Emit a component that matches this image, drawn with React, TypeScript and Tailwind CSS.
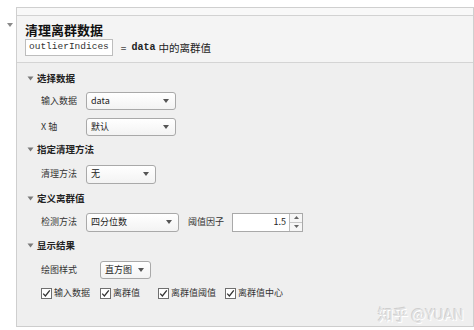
import React from 'react'

const FONT = { fontFamily: '"Noto Sans CJK SC", "Noto Sans", sans-serif' }

// Petit triangle de section
const Caret = () => (
  <svg width="7" height="5" viewBox="0 0 7 5" className="shrink-0">
    <path d="M0.5 0.5h6l-3 4z" fill="#7a7a7a" />
  </svg>
)

const SectionHeader = ({ label, className = '' }: { label: string; className?: string }) => (
  <div className={`flex h-[20px] items-center gap-[3px] pl-[10px] ${className}`}>
    <Caret />
    <span className="text-[9.5px] font-bold text-[#222]">{label}</span>
  </div>
)

const Select = ({ value, width, className = '' }: { value: string; width: string; className?: string }) => (
  <div
    className={`flex h-[18px] items-center justify-between rounded-[3px] border border-[#a9a9a9] bg-gradient-to-b from-white to-[#f3f3f3] pl-[4px] pr-[6px] ${width} ${className}`}
  >
    <span className="text-[9px] text-[#222]">{value}</span>
    <svg width="6" height="4" viewBox="0 0 6 4">
      <path d="M0 0h6l-3 4z" fill="#555" />
    </svg>
  </div>
)

const Checkbox = ({ label, width }: { label: string; width: string }) => (
  <div className={`flex items-center gap-[2px] ${width}`}>
    <div className="flex h-[11px] w-[11px] items-center justify-center border border-[#6f6f6f] bg-white">
      <svg width="9" height="9" viewBox="0 0 9 9">
        <path d="M1.2 4.6l2.2 2.3 4.4-5.6" fill="none" stroke="#333" strokeWidth="1.3" />
      </svg>
    </div>
    <span className="text-[9px] text-[#333]">{label}</span>
  </div>
)

export default function App() {
  return (
    <div className="relative flex h-[330px] w-[474px] bg-white pb-[3px] pt-[7px]" style={FONT}>
      {/* Colonne gauche avec le triangle */}
      <div className="w-[16px] shrink-0 pl-[7px] pt-[16px]">
        <svg width="6" height="4" viewBox="0 0 6 4">
          <path d="M0 0h6l-3 4z" fill="#8a8a8a" />
        </svg>
      </div>

      <div className="flex flex-1 flex-col border-l border-r border-t border-[#cfcfcf] bg-[#efefef]">
        <div className="h-[8px] border-b border-[#d2d2d2] bg-[#f8f8f8]" />

        {/* En-tête */}
        <div className="flex h-[47px] flex-col border-b border-[#d4d4d4] bg-[#f4f4f4] pl-[8px] pt-[5px]">
          <div className="text-[13px] font-bold leading-[17px] text-[#111]">清理离群数据</div>
          <div className="mt-[1px] flex items-center">
            <div
              className="flex h-[17px] items-center border border-[#bdbdbd] bg-white px-[3px] text-[9.5px] text-[#333]"
              style={{ fontFamily: '"Liberation Mono", monospace' }}
            >
              outlierIndices
            </div>
            <span className="ml-[8px] text-[10px] text-[#444]">=</span>
            <span
              className="ml-[5px] text-[10px] font-bold text-[#222]"
              style={{ fontFamily: '"Liberation Mono", monospace' }}
            >
              data
            </span>
            <span className="ml-[3px] text-[10.5px] text-[#222]">中的离群值</span>
          </div>
        </div>

        {/* Corps */}
        <div className="flex flex-1 flex-col pt-[5px]">
          <SectionHeader label="选择数据" />
          <div className="mt-[3px] flex h-[20px] items-center pl-[24px]">
            <span className="w-[45px] text-[9px] text-[#333]">输入数据</span>
            <Select value="data" width="w-[90px]" />
          </div>
          <div className="mt-[6px] flex h-[20px] items-center pl-[24px]">
            <span className="w-[45px] text-[9px] text-[#333]">X 轴</span>
            <Select value="默认" width="w-[90px]" />
          </div>

          <SectionHeader label="指定清理方法" className="mt-[2px]" />
          <div className="mt-[5px] flex h-[20px] items-center pl-[24px]">
            <span className="w-[45px] text-[9px] text-[#333]">清理方法</span>
            <Select value="无" width="w-[70px]" className="h-[19px]" />
          </div>

          <SectionHeader label="定义离群值" className="mt-[4px]" />
          <div className="mt-[4px] flex h-[20px] items-center pl-[24px]">
            <span className="w-[45px] text-[9px] text-[#333]">检测方法</span>
            <Select value="四分位数" width="w-[93px]" className="h-[19px]" />
            <span className="ml-[9px] w-[44px] text-[9px] text-[#333]">阈值因子</span>
            <div className="flex h-[19px] w-[71px] border border-[#a9a9a9] bg-white">
              <div className="flex flex-1 items-center justify-end pr-[3px] text-[9px] text-[#222]">1.5</div>
              <div className="flex w-[13px] flex-col border-l border-[#bdbdbd] bg-[#f6f6f6]">
                <div className="flex flex-1 items-center justify-center border-b border-[#c6c6c6]">
                  <svg width="5" height="3" viewBox="0 0 5 3">
                    <path d="M0 3h5l-2.5-3z" fill="#666" />
                  </svg>
                </div>
                <div className="flex flex-1 items-center justify-center">
                  <svg width="5" height="3" viewBox="0 0 5 3">
                    <path d="M0 0h5l-2.5 3z" fill="#666" />
                  </svg>
                </div>
              </div>
            </div>
          </div>

          <SectionHeader label="显示结果" className="mt-[3px]" />
          <div className="mt-[5px] flex h-[20px] items-center pl-[24px]">
            <span className="w-[59px] text-[9px] text-[#333]">绘图样式</span>
            <Select value="直方图" width="w-[51px]" />
          </div>
          <div className="mt-[3px] flex h-[20px] items-center pl-[24px]">
            <Checkbox label="输入数据" width="w-[59px]" />
            <Checkbox label="离群值" width="w-[58px]" />
            <Checkbox label="离群值阈值" width="w-[67px]" />
            <Checkbox label="离群值中心" width="w-[70px]" />
          </div>

          <div className="flex-1 border-b border-[#cdcdcd]" />
        </div>
      </div>

      {/* Filigrane */}
      <div
        className="absolute left-[378px] top-[303px] text-[15px] text-[#e2e2e2]"
        style={{ textShadow: '1px 1px 0 #ffffff, -1px -1px 0 #cfcfcf' }}
      >
        知乎 @YUAN
      </div>
    </div>
  )
}
